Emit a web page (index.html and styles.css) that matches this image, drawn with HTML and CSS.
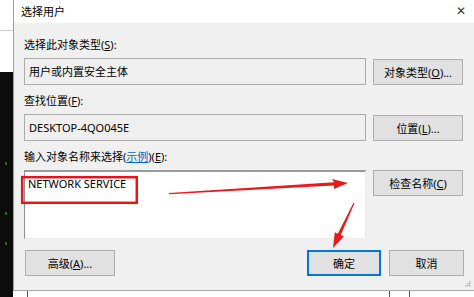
FILE: index.html
```html
<!DOCTYPE html>
<html lang="zh-CN">
<head>
  <meta charset="UTF-8">
  <title>选择用户</title>
  <link rel="stylesheet" href="styles.css">
</head>
<body>
  <div class="screen">
    <!-- desktop strip left of the dialog -->
    <div class="side">
      <div class="side-top"></div>
      <div class="side-term">
        <span class="blip b1"></span>
        <span class="blip b2"></span>
        <span class="blip b3"></span>
      </div>
    </div>

    <div class="dialog">
      <div class="titlebar">
        <span class="title">选择用户</span>
        <span class="close">&#x2715;</span>
      </div>

      <div class="body">
        <div class="label">选择此对象类型(<u>S</u>):</div>
        <div class="row">
          <div class="field">用户或内置安全主体</div>
          <button class="btn">对象类型(<u>O</u>)...</button>
        </div>

        <div class="label">查找位置(<u>F</u>):</div>
        <div class="row">
          <div class="field">DESKTOP-4QO045E</div>
          <button class="btn">位置(<u>L</u>)...</button>
        </div>

        <div class="label">输入对象名称来选择(<a class="link">示例</a>)(<u>E</u>):</div>
        <div class="row top">
          <div class="names">NETWORK SERVICE</div>
          <button class="btn">检查名称(<u>C</u>)</button>
        </div>

        <div class="actions">
          <button class="btn">高级(<u>A</u>)...</button>
          <div class="spacer"></div>
          <button class="btn primary">确定</button>
          <button class="btn">取消</button>
        </div>
      </div>
      <div class="grip">
        <svg width="6" height="6" viewBox="0 0 6 6"><g fill="#b8b8b8"><rect x="4" y="0" width="1.5" height="1.5"/><rect x="2" y="2" width="1.5" height="1.5"/><rect x="4" y="2" width="1.5" height="1.5"/><rect x="0" y="4" width="1.5" height="1.5"/><rect x="2" y="4" width="1.5" height="1.5"/><rect x="4" y="4" width="1.5" height="1.5"/></g></svg>
      </div>
    </div>

    <div class="under">
      <span class="tick t1"></span>
      <span class="tick t2"></span>
      <span class="tick t3"></span>
    </div>

    <!-- red annotations drawn over the screenshot -->
    <svg class="marks" width="474" height="297" viewBox="0 0 474 297">
      <rect x="22.2" y="177.2" width="114.6" height="25.6" fill="none" stroke="#e8141c" stroke-width="2.5"/>
      <polygon fill="#ea1a1a" points="169,193 334,182.3 332,179 348,183 334,189 334,185.6 169,194.2"/>
      <polygon fill="#ea1a1a" points="354.5,203.2 340.8,235.1 343.8,236.5 333,248 334.8,232.3 337.8,233.7 353.5,202.7"/>
    </svg>
  </div>
</body>
</html>
```

FILE: styles.css
```css
* {
  box-sizing: border-box;
}
body {
  margin: 0;
  background: #fff;
  font-family: "Noto Sans", "Noto Sans CJK SC", sans-serif;
  font-size: 11px;
  color: #000;
  overflow: hidden;
}
.screen {
  position: relative;
  width: 474px;
  height: 297px;
  display: grid;
  grid-template-columns: 13px 1fr;
  grid-template-rows: 291px 6px;
}
.side {
  grid-row: 1 / 3;
  display: flex;
  flex-direction: column;
}
.side-top {
  height: 72px;
  background: #fff;
  border-top: 30px solid #fff;
  box-shadow: inset 0 1px 0 #d0d0d0;
}
.side-term {
  flex: 1;
  background: #0c0c0c;
  position: relative;
}
.blip {
  position: absolute;
  left: 5px;
  width: 2px;
  height: 3px;
  background: #1d6b2a;
}
.b1 { top: 90px; }
.b2 { top: 140px; }
.b3 { top: 170px; }

.dialog {
  position: relative;
  background: #f0f0f0;
  border-left: 1px solid #9c9c9c;
  border-bottom: 1px solid #a8a8a8;
  display: flex;
  flex-direction: column;
}
.titlebar {
  height: 23px;
  background: #fff;
  display: flex;
  align-items: center;
  justify-content: space-between;
  padding: 0 8px 2px 7px;
}
.title {
  font-size: 11px;
}
.close {
  font-size: 12px;
  color: #333;
  font-family: "DejaVu Sans", sans-serif;
}
.body {
  padding: 14px 10px 0 10px;
}
.label {
  height: 16px;
  line-height: 16px;
  margin-bottom: 5px;
}
.row {
  display: flex;
  align-items: center;
  gap: 7px;
  margin-bottom: 8px;
}
.row.top {
  align-items: flex-start;
  margin-bottom: 11px;
}
.field {
  width: 342px;
  height: 27px;
  line-height: 17px;
  padding: 4px 4px;
  border: 1px solid #acacac;
  background: #efefef;
}
.names {
  width: 342px;
  height: 69px;
  padding: 4px 3px;
  background: #fff;
  border: 1px solid #ececec;
  border-top: 2px solid #9a9a9a;
  border-left: 1px solid #8f8f8f;
}
.btn {
  font: inherit;
  color: #000;
  width: 90px;
  height: 26px;
  padding: 0;
  background: #e1e1e1;
  border: 1px solid #adadad;
}
.link {
  color: #0066cc;
  text-decoration: underline;
}
.actions {
  display: flex;
  gap: 8px;
  padding-left: 1px;
}
.spacer {
  flex: 1;
}
.actions .btn.primary {
  width: 74px;
  border: 2px solid #0078d7;
}
.actions .btn:last-child {
  width: 75px;
}
.grip {
  position: absolute;
  right: 3px;
  bottom: 3px;
  line-height: 0;
}
.under {
  position: relative;
  background: #fff;
}
.tick {
  position: absolute;
  top: 0;
  width: 1px;
  height: 6px;
  background: #555;
}
.t1 { left: 14px; }
.t2 { left: 376px; }
.t3 { left: 396px; }
.marks {
  position: absolute;
  left: 0;
  top: 0;
  pointer-events: none;
}
```
